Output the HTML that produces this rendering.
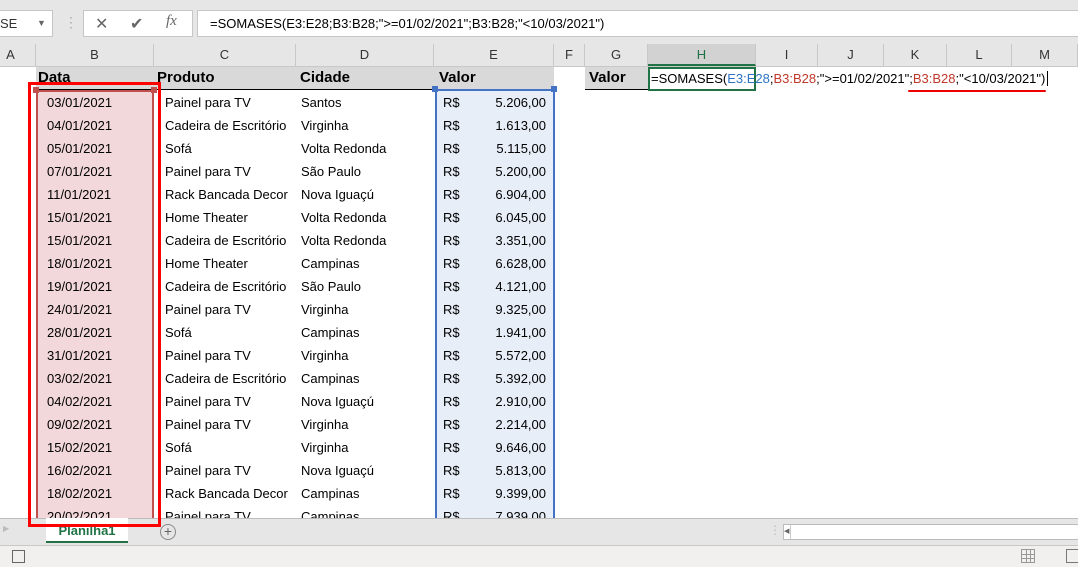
<!DOCTYPE html>
<html><head><meta charset="utf-8"><style>
*{margin:0;padding:0;box-sizing:border-box}
body{width:1078px;height:567px;overflow:hidden;background:#fff;font-family:"Liberation Sans",Arial,sans-serif;position:relative;font-size:13px;color:#000}
.a{position:absolute}
.ch{position:absolute;top:44px;height:22px;line-height:22px;text-align:center;font-size:13px;color:#333;border-right:1px solid #c8c8c8}
.row{position:absolute;left:0;width:1078px;height:23px;line-height:23px}
.row span{position:absolute;white-space:nowrap}
</style></head><body>
<div class="a" style="left:0;top:0;width:1078px;height:44px;background:#e6e6e6"></div>
<div class="a" style="left:0;top:10px;width:53px;height:27px;background:#fff;border:1px solid #c6c6c6;border-left:none;line-height:25px;font-size:13px;color:#333">SE<span style="position:absolute;left:37px;top:0;font-size:9px;color:#666">▼</span></div>
<div class="a" style="left:64px;top:14px;color:#aaa;font-size:14px">⋮</div>
<div class="a" style="left:83px;top:10px;width:110px;height:27px;background:#fff;border:1px solid #c6c6c6"></div>
<div class="a" style="left:95px;top:14px;color:#666;font-size:16px">✕</div>
<div class="a" style="left:130px;top:14px;color:#666;font-size:16px">✔</div>
<div class="a" style="left:166px;top:13px;color:#666;font-size:15px;font-family:'Liberation Serif',serif;font-style:italic">fx</div>
<div class="a" style="left:197px;top:10px;width:890px;height:27px;background:#fff;border:1px solid #c6c6c6;line-height:25px;padding-left:12px;font-size:13px">=SOMASES(E3:E28;B3:B28;"&gt;=01/02/2021";B3:B28;"&lt;10/03/2021")</div>
<div class="a" style="left:0;top:44px;width:1078px;height:23px;background:#e6e6e6;border-bottom:1px solid #c8c8c8"></div>
<div class="ch" style="left:-14px;width:50px">A</div>
<div class="ch" style="left:36px;width:118px">B</div>
<div class="ch" style="left:154px;width:142px">C</div>
<div class="ch" style="left:296px;width:138px">D</div>
<div class="ch" style="left:434px;width:120px">E</div>
<div class="ch" style="left:554px;width:31px">F</div>
<div class="ch" style="left:585px;width:63px">G</div>
<div class="ch" style="left:648px;width:108px;background:#d2d2d2;color:#217346;border-bottom:2px solid #217346">H</div>
<div class="ch" style="left:756px;width:62px">I</div>
<div class="ch" style="left:818px;width:66px">J</div>
<div class="ch" style="left:884px;width:63px">K</div>
<div class="ch" style="left:947px;width:65px">L</div>
<div class="ch" style="left:1012px;width:66px">M</div>
<div class="a" style="left:36px;top:67px;width:518px;height:23px;background:#d9d9d9;border-bottom:1px solid #000"></div>
<div class="a" style="left:38px;top:69px;font-weight:bold;font-size:15px">Data</div>
<div class="a" style="left:157px;top:69px;font-weight:bold;font-size:15px">Produto</div>
<div class="a" style="left:300px;top:69px;font-weight:bold;font-size:15px">Cidade</div>
<div class="a" style="left:439px;top:69px;font-weight:bold;font-size:15px">Valor</div>
<div class="a" style="left:585px;top:67px;width:63px;height:23px;background:#d9d9d9;border-bottom:1px solid #000"></div>
<div class="a" style="left:589px;top:69px;font-weight:bold;font-size:15px">Valor</div>
<div class="a" style="left:648px;top:67px;width:108px;height:24px;border:2px solid #217346"></div>
<div class="a" style="left:651px;top:71px;font-size:13px;white-space:nowrap">=SOMASES(<span style="color:#2e75c6">E3:E28</span>;<span style="color:#c0392b">B3:B28</span>;"&gt;=01/02/2021";<span style="color:#c0392b">B3:B28</span>;"&lt;10/03/2021")<span style="border-left:1px solid #000;margin-left:2px"></span></div>
<div class="a" style="left:908px;top:90px;width:138px;height:2px;background:#e00;border-radius:1px"></div>
<div class="a" style="left:36px;top:90px;width:118px;height:428px;background:#f2d8da;border-left:2px solid #c0504d;border-right:2px solid #c0504d;border-top:2px solid #c0504d"></div>
<div class="a" style="left:33px;top:87px;width:6px;height:6px;background:#c0504d"></div>
<div class="a" style="left:151px;top:87px;width:6px;height:6px;background:#c0504d"></div>
<div class="a" style="left:435px;top:89px;width:120px;height:429px;background:#e8eef8;border-left:2px solid #4472c4;border-right:2px solid #4472c4;border-top:2px solid #4472c4"></div>
<div class="a" style="left:432px;top:86px;width:6px;height:6px;background:#4472c4"></div>
<div class="a" style="left:551px;top:86px;width:6px;height:6px;background:#4472c4"></div>
<div class="row" style="top:91px"><span style="left:47px">03/01/2021</span><span style="left:165px">Painel para TV</span><span style="left:301px">Santos</span><span style="left:443px">R$</span><span style="right:532px">5.206,00</span></div>
<div class="row" style="top:114px"><span style="left:47px">04/01/2021</span><span style="left:165px">Cadeira de Escritório</span><span style="left:301px">Virginha</span><span style="left:443px">R$</span><span style="right:532px">1.613,00</span></div>
<div class="row" style="top:137px"><span style="left:47px">05/01/2021</span><span style="left:165px">Sofá</span><span style="left:301px">Volta Redonda</span><span style="left:443px">R$</span><span style="right:532px">5.115,00</span></div>
<div class="row" style="top:160px"><span style="left:47px">07/01/2021</span><span style="left:165px">Painel para TV</span><span style="left:301px">São Paulo</span><span style="left:443px">R$</span><span style="right:532px">5.200,00</span></div>
<div class="row" style="top:183px"><span style="left:47px">11/01/2021</span><span style="left:165px">Rack Bancada Decor</span><span style="left:301px">Nova Iguaçú</span><span style="left:443px">R$</span><span style="right:532px">6.904,00</span></div>
<div class="row" style="top:206px"><span style="left:47px">15/01/2021</span><span style="left:165px">Home Theater</span><span style="left:301px">Volta Redonda</span><span style="left:443px">R$</span><span style="right:532px">6.045,00</span></div>
<div class="row" style="top:229px"><span style="left:47px">15/01/2021</span><span style="left:165px">Cadeira de Escritório</span><span style="left:301px">Volta Redonda</span><span style="left:443px">R$</span><span style="right:532px">3.351,00</span></div>
<div class="row" style="top:252px"><span style="left:47px">18/01/2021</span><span style="left:165px">Home Theater</span><span style="left:301px">Campinas</span><span style="left:443px">R$</span><span style="right:532px">6.628,00</span></div>
<div class="row" style="top:275px"><span style="left:47px">19/01/2021</span><span style="left:165px">Cadeira de Escritório</span><span style="left:301px">São Paulo</span><span style="left:443px">R$</span><span style="right:532px">4.121,00</span></div>
<div class="row" style="top:298px"><span style="left:47px">24/01/2021</span><span style="left:165px">Painel para TV</span><span style="left:301px">Virginha</span><span style="left:443px">R$</span><span style="right:532px">9.325,00</span></div>
<div class="row" style="top:321px"><span style="left:47px">28/01/2021</span><span style="left:165px">Sofá</span><span style="left:301px">Campinas</span><span style="left:443px">R$</span><span style="right:532px">1.941,00</span></div>
<div class="row" style="top:344px"><span style="left:47px">31/01/2021</span><span style="left:165px">Painel para TV</span><span style="left:301px">Virginha</span><span style="left:443px">R$</span><span style="right:532px">5.572,00</span></div>
<div class="row" style="top:367px"><span style="left:47px">03/02/2021</span><span style="left:165px">Cadeira de Escritório</span><span style="left:301px">Campinas</span><span style="left:443px">R$</span><span style="right:532px">5.392,00</span></div>
<div class="row" style="top:390px"><span style="left:47px">04/02/2021</span><span style="left:165px">Painel para TV</span><span style="left:301px">Nova Iguaçú</span><span style="left:443px">R$</span><span style="right:532px">2.910,00</span></div>
<div class="row" style="top:413px"><span style="left:47px">09/02/2021</span><span style="left:165px">Painel para TV</span><span style="left:301px">Virginha</span><span style="left:443px">R$</span><span style="right:532px">2.214,00</span></div>
<div class="row" style="top:436px"><span style="left:47px">15/02/2021</span><span style="left:165px">Sofá</span><span style="left:301px">Virginha</span><span style="left:443px">R$</span><span style="right:532px">9.646,00</span></div>
<div class="row" style="top:459px"><span style="left:47px">16/02/2021</span><span style="left:165px">Painel para TV</span><span style="left:301px">Nova Iguaçú</span><span style="left:443px">R$</span><span style="right:532px">5.813,00</span></div>
<div class="row" style="top:482px"><span style="left:47px">18/02/2021</span><span style="left:165px">Rack Bancada Decor</span><span style="left:301px">Campinas</span><span style="left:443px">R$</span><span style="right:532px">9.399,00</span></div>
<div class="row" style="top:505px"><span style="left:47px">20/02/2021</span><span style="left:165px">Painel para TV</span><span style="left:301px">Campinas</span><span style="left:443px">R$</span><span style="right:532px">7.939,00</span></div>
<div class="a" style="left:0;top:518px;width:1078px;height:28px;background:#e6e6e6;border-top:1px solid #bdbdbd;border-bottom:1px solid #c8c8c8"></div>
<div class="a" style="left:3px;top:524px;font-size:8px;color:#bbb">▶</div>
<div class="a" style="left:46px;top:518px;width:82px;height:25px;background:#fff;border-bottom:2px solid #217346;text-align:center;line-height:25px;color:#217346;font-weight:bold;font-size:13px">Planilha1</div>
<div class="a" style="left:160px;top:524px;width:16px;height:16px;border:1px solid #888;border-radius:50%;text-align:center;line-height:13px;color:#666;font-size:14px">+</div>
<div class="a" style="left:769px;top:523px;color:#bbb;font-size:12px">⋮</div>
<div class="a" style="left:783px;top:524px;width:300px;height:16px;background:#fff;border:1px solid #bbb"></div>
<div class="a" style="left:784px;top:525px;width:7px;height:14px;border-right:1px solid #ccc;font-size:7px;color:#666;line-height:14px">◀</div>
<div class="a" style="left:0;top:546px;width:1078px;height:21px;background:#f1f0ef"></div>
<div class="a" style="left:12px;top:550px;width:13px;height:13px;border:1px solid #666"></div>
<div class="a" style="left:1021px;top:549px;width:14px;height:14px;border:1px solid #999;background:linear-gradient(#999,#999) 4px 0/1px 100% no-repeat,linear-gradient(#999,#999) 8px 0/1px 100% no-repeat,linear-gradient(#999,#999) 0 4px/100% 1px no-repeat,linear-gradient(#999,#999) 0 8px/100% 1px no-repeat"></div>
<div class="a" style="left:1066px;top:549px;width:14px;height:14px;border:1px solid #777"></div>
<div class="a" style="left:28px;top:82px;width:133px;height:445px;border:3px solid #f00"></div>
</body></html>
